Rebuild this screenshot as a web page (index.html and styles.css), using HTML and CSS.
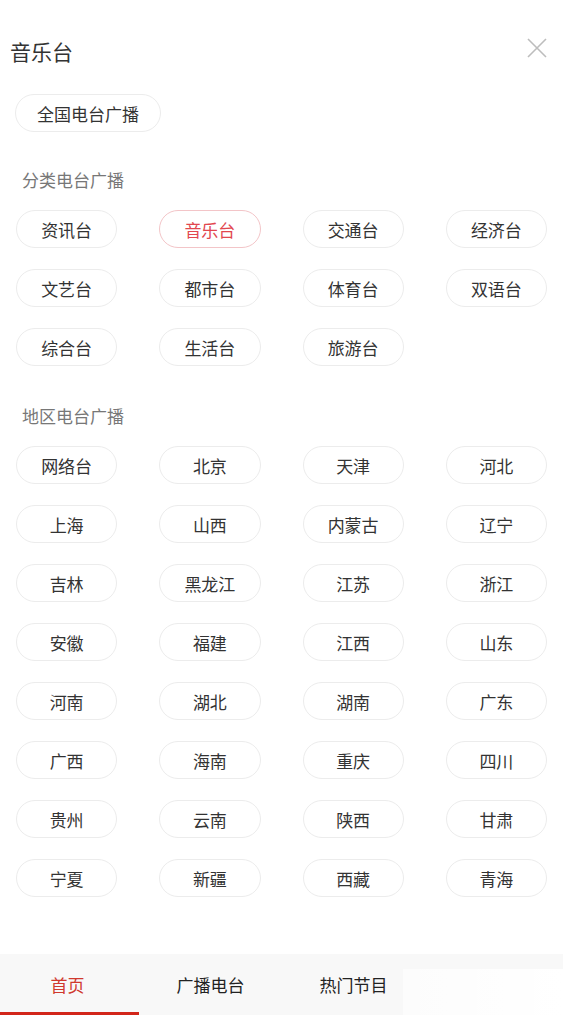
FILE: index.html
```html
<!DOCTYPE html>
<html>
	<head>
		<meta charset="utf-8">
		<link rel="stylesheet" href="styles.css">
		<title>音乐台</title>
	</head>
	<body>
		<main class="page">
			<header class="head">
				<h1 class="head-title">音乐台</h1>
				<svg class="head-close" width="20" height="20" viewBox="0 0 20 20">
					<path d="M1 1 L19 19 M19 1 L1 19" stroke="#bdbdbd" stroke-width="1.6" fill="none"/>
				</svg>
			</header>
			<section class="all">
				<span class="pill pill-wide">全国电台广播</span>
			</section>
			<section class="group">
				<h2 class="group-label">分类电台广播</h2>
				<div class="grid">
					<span class="pill">资讯台</span>
					<span class="pill pill-on">音乐台</span>
					<span class="pill">交通台</span>
					<span class="pill">经济台</span>
					<span class="pill">文艺台</span>
					<span class="pill">都市台</span>
					<span class="pill">体育台</span>
					<span class="pill">双语台</span>
					<span class="pill">综合台</span>
					<span class="pill">生活台</span>
					<span class="pill">旅游台</span>
				</div>
			</section>
			<section class="group group-region">
				<h2 class="group-label">地区电台广播</h2>
				<div class="grid">
					<span class="pill">网络台</span>
					<span class="pill">北京</span>
					<span class="pill">天津</span>
					<span class="pill">河北</span>
					<span class="pill">上海</span>
					<span class="pill">山西</span>
					<span class="pill">内蒙古</span>
					<span class="pill">辽宁</span>
					<span class="pill">吉林</span>
					<span class="pill">黑龙江</span>
					<span class="pill">江苏</span>
					<span class="pill">浙江</span>
					<span class="pill">安徽</span>
					<span class="pill">福建</span>
					<span class="pill">江西</span>
					<span class="pill">山东</span>
					<span class="pill">河南</span>
					<span class="pill">湖北</span>
					<span class="pill">湖南</span>
					<span class="pill">广东</span>
					<span class="pill">广西</span>
					<span class="pill">海南</span>
					<span class="pill">重庆</span>
					<span class="pill">四川</span>
					<span class="pill">贵州</span>
					<span class="pill">云南</span>
					<span class="pill">陕西</span>
					<span class="pill">甘肃</span>
					<span class="pill">宁夏</span>
					<span class="pill">新疆</span>
					<span class="pill">西藏</span>
					<span class="pill">青海</span>
				</div>
			</section>
			<nav class="tabs">
				<span class="tab tab-on">首页</span>
				<span class="tab">广播电台</span>
				<span class="tab">热门节目</span>
				<span class="tabs-fade"></span>
			</nav>
		</main>
	</body>
</html>
```

FILE: styles.css
```css
body{ margin: 0; background: #fff; font-family: "Noto Sans CJK SC", "Noto Sans", sans-serif; color: #333; }
.page{ min-height: 100vh; display: flex; flex-direction: column; }

.head{ display: flex; justify-content: space-between; align-items: flex-start; padding: 36px 16px 0 10px; }
.head-title{ margin: 0; font-size: 21px; font-weight: normal; line-height: 30px; color: #333; }
.head-close{ margin-top: 2px; }

.all{ padding: 28px 16px 0 15px; display: flex; }
.pill{ box-sizing: border-box; height: 38px; border: 1px solid #ececec; border-radius: 19px; display: flex; align-items: center; justify-content: center; font-size: 17px; color: #333; white-space: nowrap; }
.pill-wide{ padding: 0 21px; }
.pill-on{ color: #e2474f; border-color: #f3c5c8; }

.group{ padding: 36px 16px 0 16px; }
.group-region{ padding-top: 38px; }
.group-label{ margin: 0 0 18px 6px; font-size: 17px; font-weight: normal; line-height: 24px; color: #777; }
.grid{ display: grid; grid-template-columns: repeat(4, 1fr); column-gap: 42px; row-gap: 21px; }

.tabs{ margin-top: auto; position: relative; height: 61px; background: #f8f8f8; display: flex; }
.tab{ width: 143px; box-sizing: border-box; padding-right: 8px; text-align: center; font-size: 17px; line-height: 62px; color: #222; position: relative; }
.tab-on{ color: #d0392e; }
.tab-on::after{ content: ""; position: absolute; left: 0; bottom: 0; width: 139px; height: 3px; background: #d2261a; }
.tabs-fade{ position: absolute; right: 0; top: 15px; bottom: 0; width: 160px; background: linear-gradient(to right, rgba(255,255,255,0.6), #fff); }
```
